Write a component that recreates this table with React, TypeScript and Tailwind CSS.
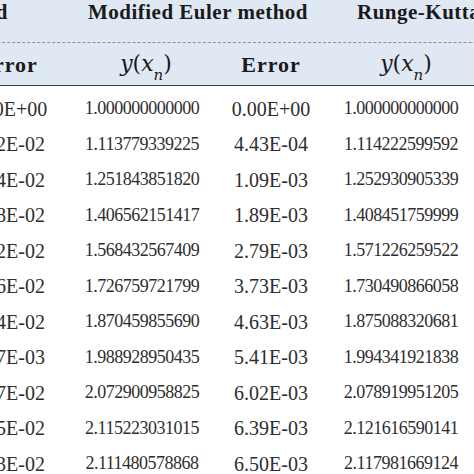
import React from "react";

// Cropped view of a numeric results table
const rows: [string, string, string, string][] = [
  ["0.00E+00", "1.000000000000", "0.00E+00", "1.000000000000"],
  ["6.62E-02", "1.113779339225", "4.43E-04", "1.114222599592"],
  ["1.54E-02", "1.251843851820", "1.09E-03", "1.252930905339"],
  ["2.28E-02", "1.406562151417", "1.89E-03", "1.408451759999"],
  ["2.72E-02", "1.568432567409", "2.79E-03", "1.571226259522"],
  ["3.36E-02", "1.726759721799", "3.73E-03", "1.730490866058"],
  ["4.04E-02", "1.870459855690", "4.63E-03", "1.875088320681"],
  ["7.77E-03", "1.988928950435", "5.41E-03", "1.994341921838"],
  ["1.17E-02", "2.072900958825", "6.02E-03", "2.078919951205"],
  ["1.55E-02", "2.115223031015", "6.39E-03", "2.121616590141"],
  ["1.93E-02", "2.111480578868", "6.50E-03", "2.117981669124"],
];

const serif = "font-['Liberation_Serif','Times_New_Roman',serif]";

const Yxn = () => (
  <span className="font-['DejaVu_Serif',serif] text-[22px] leading-none text-[#1a1a1a] whitespace-nowrap">
    <i>y</i>(<i>x</i>
    <sub className="text-[15px] italic align-[-5px]">n</sub>)
  </span>
);

const HeadText = ({ children, wide }: { children: React.ReactNode; wide?: boolean }) => (
  <span
    className={`${serif} font-bold text-[#1a1a1a] whitespace-nowrap ${
      wide ? "text-[22px] tracking-[1px]" : "text-[21px] tracking-[0.5px]"
    }`}
  >
    {children}
  </span>
);

const cols = "grid grid-cols-[112px_146px_112px_148px_112px]";

export default function App() {
  return (
    <div className="w-[474px] h-[474px] overflow-hidden bg-white">
      <div className="ml-[-43px] w-[630px]">
        <div className="bg-[#dfe8f3]">
          <div className={`${cols} h-[43px] border-b border-dashed border-[#8a8f96]`}>
            <div className="flex justify-end pr-[61px] leading-[25px]">
              <HeadText>Euler method</HeadText>
            </div>
            <div className="col-span-2 flex justify-center leading-[25px]">
              <HeadText>Modified Euler method</HeadText>
            </div>
            <div className="col-span-2 flex pl-[30px] leading-[25px]">
              <HeadText>Runge-Kutta method</HeadText>
            </div>
          </div>
          <div className={`${cols} h-[43px] items-center border-b border-[#3a3a3a]`}>
            <div className="flex justify-center pr-[10px]"><HeadText wide>Error</HeadText></div>
            <div className="flex justify-center pl-[8px]"><Yxn /></div>
            <div className="flex justify-center"><HeadText wide>Error</HeadText></div>
            <div className="flex justify-center pl-[10px]"><Yxn /></div>
            <div className="flex justify-center"><HeadText wide>Error</HeadText></div>
          </div>
        </div>
        <div className={`pt-[5px] ${serif} text-[#2e2e2e]`}>
          {rows.map((r, i) => (
            <div key={i} className={`${cols} h-[35.5px] items-center`}>
              <div className="text-center text-[20px] pr-[10px]">{r[0]}</div>
              <div className="text-center text-[18px] tracking-[-0.5px]">{r[1]}</div>
              <div className="text-center text-[20px]">{r[2]}</div>
              <div className="text-center text-[18px] tracking-[-0.5px]">{r[3]}</div>
              <div className="text-center text-[20px]">{i === 0 ? "0.00E+00" : ""}</div>
            </div>
          ))}
        </div>
      </div>
    </div>
  );
}
